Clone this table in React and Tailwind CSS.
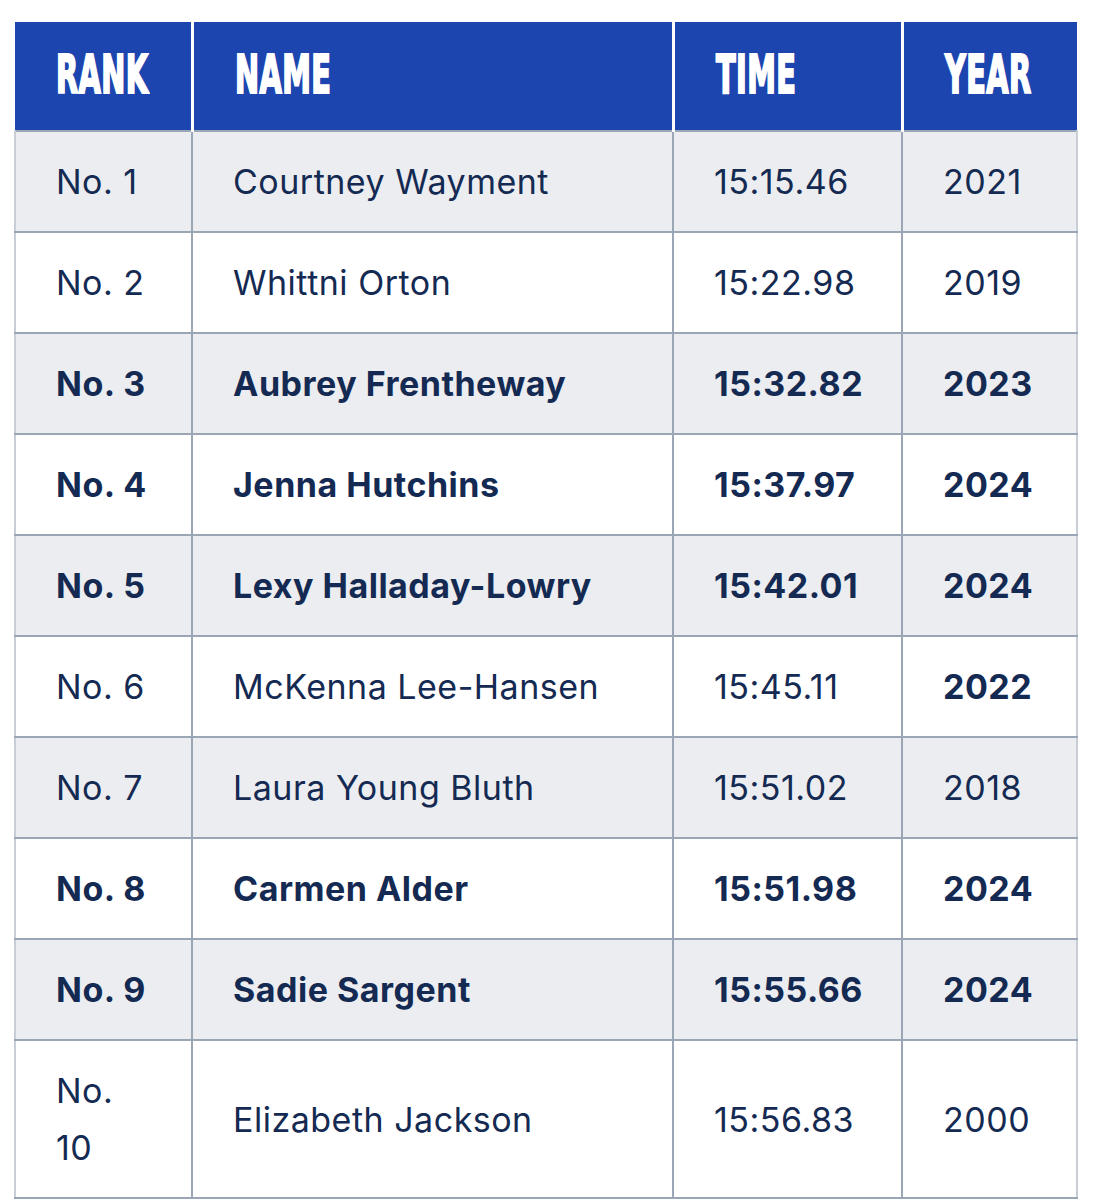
import React from "react";

const rows = [
  { rank: "No. 1", name: "Courtney Wayment", time: "15:15.46", year: "2021", b: [0, 0, 0, 0] },
  { rank: "No. 2", name: "Whittni Orton", time: "15:22.98", year: "2019", b: [0, 0, 0, 0] },
  { rank: "No. 3", name: "Aubrey Frentheway", time: "15:32.82", year: "2023", b: [1, 1, 1, 1] },
  { rank: "No. 4", name: "Jenna Hutchins", time: "15:37.97", year: "2024", b: [1, 1, 1, 1] },
  { rank: "No. 5", name: "Lexy Halladay-Lowry", time: "15:42.01", year: "2024", b: [1, 1, 1, 1] },
  { rank: "No. 6", name: "McKenna Lee-Hansen", time: "15:45.11", year: "2022", b: [0, 0, 0, 1] },
  { rank: "No. 7", name: "Laura Young Bluth", time: "15:51.02", year: "2018", b: [0, 0, 0, 0] },
  { rank: "No. 8", name: "Carmen Alder", time: "15:51.98", year: "2024", b: [1, 1, 1, 1] },
  { rank: "No. 9", name: "Sadie Sargent", time: "15:55.66", year: "2024", b: [1, 1, 1, 1] },
  { rank: "No. 10", name: "Elizabeth Jackson", time: "15:56.83", year: "2000", b: [0, 0, 0, 0] },
];

function Th({ children, last }) {
  return (
    <th
      className={
        "h-[109px] bg-[#1d45b0] p-0 pl-[41px] text-left align-middle " +
        (last ? "" : "border-r-[3px] border-white")
      }
    >
      <span
        className="inline-block origin-left scale-x-[0.8] scale-y-[1.32] text-[40px] font-bold leading-none text-white [-webkit-text-stroke:1.6px_white]"
        style={{ fontFamily: '"Liberation Sans Narrow", "DejaVu Sans Condensed", "Liberation Sans", sans-serif' }}
      >
        {children}
      </span>
    </th>
  );
}

export default function App() {
  return (
    <div className="min-h-[1200px] bg-white pt-[22px] pl-[14px]">
      <table
        className="w-[1062px] table-fixed border-collapse text-[34px] leading-[57px] tracking-[0.5px] text-[#142a52]"
        style={{ fontFamily: 'Inter, "Liberation Sans", sans-serif' }}
      >
        <colgroup>
          <col className="w-[177px]" />
          <col className="w-[481px]" />
          <col className="w-[229px]" />
          <col className="w-[175px]" />
        </colgroup>
        <thead>
          <tr>
            <Th>RANK</Th>
            <Th>NAME</Th>
            <Th>TIME</Th>
            <Th last>YEAR</Th>
          </tr>
        </thead>
        <tbody>
          {rows.map((r, i) => (
            <tr key={i} className={i % 2 === 0 ? "bg-[#ebedf0]" : "bg-white"}>
              {[r.rank, r.name, r.time, r.year].map((v, j) => (
                <td
                  key={j}
                  className={
                    "border-2 border-[#9aa5b6] py-[21px] pl-[40px] pr-[40px] align-middle " +
                    (r.b[j] ? "font-bold" : "font-normal") +
                    (j === 0 ? " border-l-[#c9ced6]" : "") +
                    (j === 3 ? " border-r-[#c9ced6]" : "")
                  }
                >
                  {v}
                </td>
              ))}
            </tr>
          ))}
        </tbody>
      </table>
    </div>
  );
}
